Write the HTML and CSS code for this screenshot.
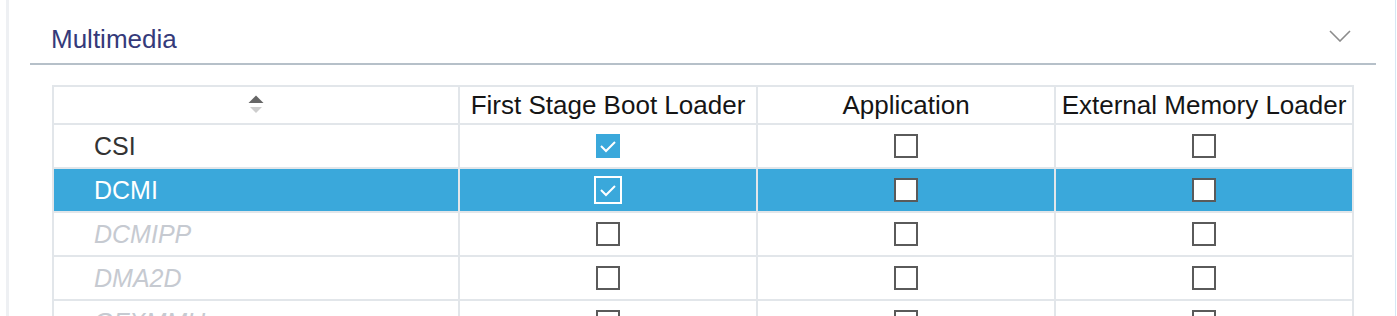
FILE: index.html
```html
<!DOCTYPE html>
<html lang="en">
<head>
    <meta charset="UTF-8">
    <title>Multimedia</title>
    <link rel="stylesheet" href="styles.css">
</head>
<body>
    <div class="panel">
        <div class="section">
            <div class="section-head">
                <span class="section-title">Multimedia</span>
                <svg class="chevron" width="22" height="12" viewBox="0 0 22 12">
                    <path d="M1 1 L11 11 L21 1" fill="none" stroke="#8c8c8c" stroke-width="1.6"/>
                </svg>
            </div>

            <div class="grid">
                <!-- header -->
                <div class="row">
                    <div class="cell head">
                        <svg width="16" height="20" viewBox="0 0 16 20">
                            <polygon points="0.5,8 8,0.5 15.5,8" fill="#666"/>
                            <polygon points="2,12 8,18 14,12" fill="#cdcdcd"/>
                        </svg>
                    </div>
                    <div class="cell head">First Stage Boot Loader</div>
                    <div class="cell head">Application</div>
                    <div class="cell head">External Memory Loader</div>
                </div>

                <div class="row">
                    <div class="cell name">CSI</div>
                    <div class="cell"><span class="box on"><svg width="24" height="24" viewBox="0 0 24 24"><path d="M5 12 L10 17 L19 8" fill="none" stroke="#fff" stroke-width="2"/></svg></span></div>
                    <div class="cell"><span class="box"></span></div>
                    <div class="cell"><span class="box"></span></div>
                </div>

                <div class="row sel">
                    <div class="cell name">DCMI</div>
                    <div class="cell"><span class="box on ring"><svg width="24" height="24" viewBox="0 0 24 24"><path d="M5 12 L10 17 L19 8" fill="none" stroke="#fff" stroke-width="2"/></svg></span></div>
                    <div class="cell"><span class="box"></span></div>
                    <div class="cell"><span class="box"></span></div>
                </div>

                <div class="row off">
                    <div class="cell name">DCMIPP</div>
                    <div class="cell"><span class="box"></span></div>
                    <div class="cell"><span class="box"></span></div>
                    <div class="cell"><span class="box"></span></div>
                </div>

                <div class="row off">
                    <div class="cell name">DMA2D</div>
                    <div class="cell"><span class="box"></span></div>
                    <div class="cell"><span class="box"></span></div>
                    <div class="cell"><span class="box"></span></div>
                </div>

                <div class="row off">
                    <div class="cell name">GFXMMU</div>
                    <div class="cell"><span class="box"></span></div>
                    <div class="cell"><span class="box"></span></div>
                    <div class="cell"><span class="box"></span></div>
                </div>
            </div>
        </div>
    </div>
</body>
</html>
```

FILE: styles.css
```css
* {
    margin: 0px;
    padding: 0px;
    box-sizing: border-box;
}

body {
    width: 1397px;
    height: 316px;
    overflow: hidden;
    background-color: white;
    font-family: "Liberation Sans", Arial, sans-serif;
}

.panel {
    margin-left: 6px;
    width: 1390px;
    height: 316px;
    border-left: 3px solid #eef0f3;
    border-right: 1px solid #d6e7f4;
    overflow: hidden;
}

.section {
    margin: 0 19px 0 21px;
}

.section-head {
    display: flex;
    justify-content: space-between;
    align-items: flex-start;
    height: 65px;
    padding: 24px 25px 0 21px;
    border-bottom: 2px solid #b6c0c9;
}

.section-title {
    font-size: 26px;
    line-height: 30px;
    color: #353a7a;
}

.chevron {
    margin-top: 6px;
}

.grid {
    display: grid;
    grid-template-columns: 404px 296px 296px 296px;
    grid-template-rows: 36px;
    grid-auto-rows: 42px;
    gap: 2px;
    padding: 2px;
    margin: 20px 22px 0 22px;
    background-color: #e2e6ea;
}

.row {
    display: contents;
}

.cell {
    display: flex;
    align-items: center;
    justify-content: center;
    background-color: white;
    font-size: 25px;
    color: #333;
}

.cell.head {
    font-size: 26px;
    color: #151515;
    white-space: nowrap;
}

.cell.name {
    justify-content: flex-start;
    padding-left: 40px;
}

.row.sel .cell {
    background-color: #3aa8db;
    color: white;
}

.row.off .name {
    font-style: italic;
    color: #c6cad1;
}

.box {
    display: block;
    width: 24px;
    height: 24px;
    border: 2px solid #5a5a5a;
    background-color: white;
}

.box.on {
    border: none;
    background-color: #3aa8db;
}

.box.on svg {
    display: block;
}

.box.ring {
    box-shadow: 0 0 0 2px white;
}
```
